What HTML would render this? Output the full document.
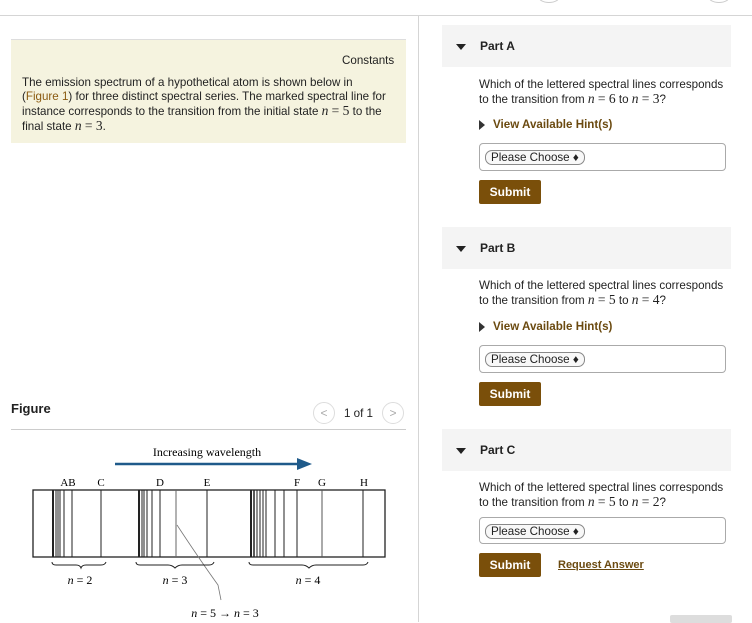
<!DOCTYPE html>
<html><head><meta charset="utf-8"><style>
*{margin:0;padding:0;box-sizing:border-box}
body{width:752px;height:622px;overflow:hidden;background:#fff;font-family:"Liberation Sans",Arial,sans-serif;color:#222;position:relative;font-size:11.6px}
.a{position:absolute}
.m{font-family:"Liberation Serif",serif;font-style:italic;font-size:13.5px}
.mn{font-family:"Liberation Serif",serif;font-size:13.5px}
.hdr{position:absolute;left:442px;width:289px;height:42px;background:#f4f4f4}
.hdr .t{position:absolute;left:38px;top:14px;font-weight:bold;font-size:12px;color:#222}
.hdr .tri{position:absolute;left:14px;top:19px;width:0;height:0;border-left:5px solid transparent;border-right:5px solid transparent;border-top:6px solid #222}
.q{position:absolute;left:479px;font-size:11.6px;line-height:14px;color:#222;white-space:nowrap}
.hint{position:absolute;left:479px;font-weight:bold;font-size:11.6px;color:#6b4a10}
.hint:before{content:"";position:absolute;left:0;top:2px;border-top:5px solid transparent;border-bottom:5px solid transparent;border-left:6px solid #333}
.hint span{margin-left:14px}
.box{position:absolute;left:479px;width:247px;height:28px;border:1px solid #aaa;border-radius:4px}
.sel{position:absolute;left:5px;top:6px;height:15px;border:1px solid #888;border-radius:7px;padding:0 5px;font-size:11.6px;line-height:13px;background:#f8f8f8}
.sub{position:absolute;left:479px;width:62px;height:24px;background:#7a4f0a;color:#fff;font-weight:bold;font-size:12px;text-align:center;line-height:24px;border-radius:2px}
</style></head><body>
<div class="a" style="left:0;top:15px;width:752px;height:1px;background:#d5d5d5"></div>
<div class="a" style="left:418px;top:15px;width:1px;height:607px;background:#d5d5d5"></div>
<div class="a" style="left:538px;top:-10px;width:22px;height:13px;border:1px solid #ccc;border-radius:50%"></div>
<div class="a" style="left:708px;top:-10px;width:22px;height:13px;border:1px solid #ccc;border-radius:50%"></div>

<div class="a" style="left:11px;top:39px;width:395px;height:104px;background:#f5f3df;border-top:1px solid #ddd"></div>
<div class="a" style="left:342px;top:54px;font-size:11.6px">Constants</div>
<div class="a" style="left:22px;top:76px;width:380px;font-size:11.6px;line-height:14px">The emission spectrum of a hypothetical atom is shown below in<br>(<span style="color:#8a5a10">Figure 1</span>) for three distinct spectral series. The marked spectral line for<br>instance corresponds to the transition from the initial state <span class="m">n</span> <span class="mn">= 5</span> to the<br>final state <span class="m">n</span> <span class="mn">= 3</span>.</div>

<div class="a" style="left:11px;top:401px;font-weight:bold;font-size:13px">Figure</div>
<div class="a" style="left:313px;top:402px;width:22px;height:22px;border:1px solid #ddd;border-radius:50%;color:#aaa;text-align:center;line-height:20px;font-size:12px">&lt;</div>
<div class="a" style="left:344px;top:407px;font-size:11.6px">1 of 1</div>
<div class="a" style="left:382px;top:402px;width:22px;height:22px;border:1px solid #ddd;border-radius:50%;color:#aaa;text-align:center;line-height:20px;font-size:12px">&gt;</div>
<div class="a" style="left:11px;top:429px;width:395px;height:1px;background:#ccc"></div>

<svg class="a" style="left:0;top:430px" width="410" height="192" viewBox="0 430 410 192" font-family="Liberation Serif,serif">
<text x="207" y="456" text-anchor="middle" font-size="12">Increasing wavelength</text>
<line x1="115" y1="464" x2="300" y2="464" stroke="#1f5a8a" stroke-width="2.5"/>
<polygon points="297,458 312,464 297,470" fill="#1f5a8a"/>
<g font-size="11" text-anchor="middle">
<text x="68" y="486">AB</text><text x="101" y="486">C</text><text x="160" y="486">D</text><text x="207" y="486">E</text>
<text x="297" y="486">F</text><text x="322" y="486">G</text><text x="364" y="486">H</text></g>
<rect x="33" y="490" width="352" height="67" fill="#fff" stroke="#222" stroke-width="1.3"/>
<g stroke="#222" stroke-width="1">
<line x1="53" y1="490" x2="53" y2="557" stroke-width="2"/><line x1="56" y1="490" x2="56" y2="557"/><line x1="58" y1="490" x2="58" y2="557"/><line x1="60" y1="490" x2="60" y2="557"/><line x1="64" y1="490" x2="64" y2="557"/><line x1="72" y1="490" x2="72" y2="557"/><line x1="101" y1="490" x2="101" y2="557"/>
<line x1="139" y1="490" x2="139" y2="557" stroke-width="2"/><line x1="142" y1="490" x2="142" y2="557"/><line x1="144" y1="490" x2="144" y2="557"/><line x1="147" y1="490" x2="147" y2="557"/><line x1="152" y1="490" x2="152" y2="557"/><line x1="160" y1="490" x2="160" y2="557"/><line x1="176" y1="490" x2="176" y2="557" stroke="#666"/><line x1="207" y1="490" x2="207" y2="557"/>
<line x1="251" y1="490" x2="251" y2="557" stroke-width="2"/><line x1="254" y1="490" x2="254" y2="557" stroke-width="1.5"/><line x1="257" y1="490" x2="257" y2="557"/><line x1="260" y1="490" x2="260" y2="557"/><line x1="263" y1="490" x2="263" y2="557"/><line x1="266" y1="490" x2="266" y2="557"/><line x1="275" y1="490" x2="275" y2="557"/><line x1="284" y1="490" x2="284" y2="557"/><line x1="297" y1="490" x2="297" y2="557"/><line x1="322" y1="490" x2="322" y2="557" stroke="#555"/><line x1="363" y1="490" x2="363" y2="557"/>
</g>
<path d="M177,525 Q200,560 218,585 L221,600" fill="none" stroke="#777" stroke-width="0.8"/>
<g fill="none" stroke="#222" stroke-width="1">
<path d="M52,562 q0,3 4,3 h20 q4,0 5,3 q1,-3 5,-3 h15 q4,0 5,-3"/>
<path d="M136,562 q0,3 4,3 h28 q4,0 7,3 q3,-3 7,-3 h27 q4,0 5,-3"/>
<path d="M249,562 q0,3 4,3 h49 q4,0 7,3 q3,-3 7,-3 h47 q4,0 5,-3"/>
</g>
<g font-size="12" text-anchor="middle"><text x="80" y="584"><tspan font-style="italic">n</tspan> = 2</text><text x="175" y="584"><tspan font-style="italic">n</tspan> = 3</text><text x="308" y="584"><tspan font-style="italic">n</tspan> = 4</text>
<text x="225" y="617"><tspan font-style="italic">n</tspan> = 5 → <tspan font-style="italic">n</tspan> = 3</text></g>
</svg>

<div class="hdr" style="top:25px"><div class="tri"></div><div class="t">Part A</div></div>
<div class="q" style="top:78px">Which of the lettered spectral lines corresponds<br>to the transition from <span class="m">n</span> <span class="mn">= 6</span> to <span class="m">n</span> <span class="mn">= 3</span>?</div>
<div class="hint" style="top:118px"><span>View Available Hint(s)</span></div>
<div class="box" style="top:143px"><div class="sel">Please Choose ♦</div></div>
<div class="sub" style="top:180px">Submit</div>

<div class="hdr" style="top:227px"><div class="tri"></div><div class="t">Part B</div></div>
<div class="q" style="top:279px">Which of the lettered spectral lines corresponds<br>to the transition from <span class="m">n</span> <span class="mn">= 5</span> to <span class="m">n</span> <span class="mn">= 4</span>?</div>
<div class="hint" style="top:320px"><span>View Available Hint(s)</span></div>
<div class="box" style="top:345px"><div class="sel">Please Choose ♦</div></div>
<div class="sub" style="top:382px">Submit</div>

<div class="hdr" style="top:429px"><div class="tri"></div><div class="t">Part C</div></div>
<div class="q" style="top:481px">Which of the lettered spectral lines corresponds<br>to the transition from <span class="m">n</span> <span class="mn">= 5</span> to <span class="m">n</span> <span class="mn">= 2</span>?</div>
<div class="box" style="top:517px;height:27px"><div class="sel">Please Choose ♦</div></div>
<div class="sub" style="top:553px">Submit</div>
<div class="a" style="left:558px;top:559px;font-weight:bold;font-size:11px;color:#6b4a10;text-decoration:underline">Request Answer</div>
<div class="a" style="left:670px;top:615px;width:62px;height:8px;background:#ddd;border-radius:2px"></div>
</body></html>
